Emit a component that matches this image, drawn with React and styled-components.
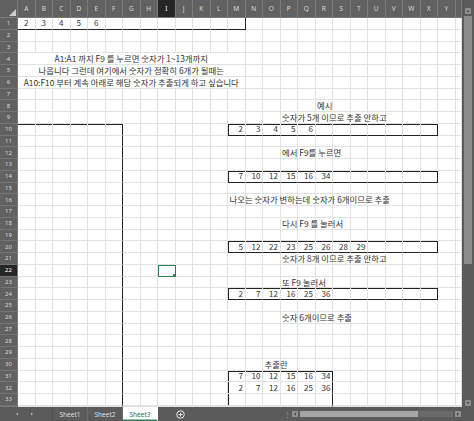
import React from 'react';
import styled, { createGlobalStyle } from 'styled-components';

const INK = '#222';
const GRID = '#e2e2e2';
const GREEN = '#2f7d57';

const GlobalStyle = createGlobalStyle`
  html, body {
    margin: 0;
    padding: 0;
    background: #5b5b5b;
  }
  body {
    width: 474px;
    height: 421px;
    overflow: hidden;
    font-family: "Noto Sans CJK KR", "Noto Sans", sans-serif;
  }
`;

const COLS = 'ABCDEFGHIJKLMNOPQRSTUVWXY'.split('');
const LAST_ROW = 34;

// A4:M6 style merged notes, centred over A:M
const merged = {
  4: 'A1:A1 까지 F9 를 누르면 숫자가 1~13개까지',
  5: '나옵니다 그런데 여기에서 숫자가 정확히 6개가 될때는',
  6: 'A10:F10 부터 계속 아래로 해당 숫자가 추출되게 하고 싶습니다',
};

// [column index, text] — text spills to the right like excel does
const notes = {
  8: [17, '예시'],
  9: [15, '숫자가 5개 이므로 추출 안하고'],
  12: [15, '에서 F9를 누르면'],
  16: [12, '나오는 숫자가 변하는데 숫자가 6개이므로 추출'],
  18: [15, '다시 F9 를 눌러서'],
  21: [15, '숫자가 8개 이므로 추출 안하고'],
  23: [15, '또 F9 눌러서'],
  26: [15, '숫자 6개이므로 추출'],
  30: [14, '추출란'],
};

const values = {
  1: { start: 0, nums: [2, 3, 4, 5, 6], align: 'center' },
  10: { start: 12, nums: [2, 3, 4, 5, 6] },
  14: { start: 12, nums: [7, 10, 12, 15, 16, 34] },
  20: { start: 12, nums: [5, 12, 22, 23, 25, 26, 28, 29] },
  24: { start: 12, nums: [2, 7, 12, 16, 25, 36] },
  31: { start: 12, nums: [7, 10, 12, 15, 16, 34] },
  32: { start: 12, nums: [2, 7, 12, 16, 25, 36] },
};

const SELECTED = { r: 22, c: 8 };

const borders = (r, c) => {
  const b = { t: false, r: false, b: false, l: false };
  if (r === 1 && c <= 12) {
    b.b = true;
    if (c === 12) b.r = true;
  }
  if (r >= 10 && c <= 5) {
    if (r === 10) b.t = true;
    if (c === 5) b.r = true;
  }
  if ([10, 14, 20, 24].includes(r) && c >= 12 && c <= 23) {
    b.t = true;
    b.b = true;
    if (c === 12) b.l = true;
    if (c === 23) b.r = true;
  }
  if (r >= 31 && c >= 12 && c <= 17) {
    if (r === 31) b.t = true;
    if (c === 12) b.l = true;
    if (c === 17) b.r = true;
  }
  return b;
};

const shadow = (p) => {
  const s = [];
  if (p.$bt) s.push(`inset 0 1px 0 ${INK}`);
  if (p.$bl) s.push(`inset 1px 0 0 ${INK}`);
  return s.length ? s.join(', ') : 'none';
};

const Window = styled.div`
  width: 474px;
  height: 421px;
  display: flex;
  flex-direction: column;
  background: #5b5b5b;
`;

const Main = styled.div`
  display: flex;
  height: 407px;
`;

const Sheet = styled.div`
  flex: 1;
  display: grid;
  grid-template-columns: 18px repeat(25, 17.5px) 1fr;
  grid-template-rows: 18px repeat(33, 11.75px) 1fr;
  background: #fff;
  overflow: hidden;
`;

const Corner = styled.div`
  background: #616161;
  border-right: 1px solid #7a7a7a;
  border-bottom: 1px solid #7a7a7a;
  display: flex;
  align-items: flex-end;
  justify-content: flex-end;
  padding: 0 1px 1px 0;
  box-sizing: border-box;
`;

const ColHead = styled.div`
  background: ${(p) => (p.$active ? '#262626' : '#616161')};
  color: ${(p) => (p.$active ? '#fff' : '#d8d8d8')};
  border-right: 1px solid #7a7a7a;
  border-bottom: 1px solid #7a7a7a;
  box-sizing: border-box;
  display: flex;
  align-items: center;
  justify-content: center;
  font-family: "Noto Sans", sans-serif;
  font-size: 6.5px;
  overflow: hidden;
`;

const RowHead = styled(ColHead)`
  font-size: 6px;
  border-bottom-color: #747474;
`;

const Cell = styled.div`
  box-sizing: border-box;
  min-width: 0;
  background: #fff;
  border-right: 1px solid ${(p) => (p.$br ? INK : GRID)};
  border-bottom: 1px solid ${(p) => (p.$bb ? INK : GRID)};
  box-shadow: ${shadow};
  grid-column: span ${(p) => p.$span || 1};
  display: flex;
  align-items: center;
  justify-content: ${(p) =>
    p.$align === 'right' ? 'flex-end' : p.$align === 'center' ? 'center' : 'flex-start'};
  padding: 0 1.5px;
  font-size: ${(p) => (p.$spill ? '8.4px' : '8px')};
  line-height: 1;
  color: #333;
  white-space: nowrap;
  overflow: ${(p) => (p.$spill ? 'visible' : 'hidden')};
  position: relative;
  z-index: ${(p) => (p.$sel ? 2 : p.$spill ? 1 : 'auto')};
  outline: ${(p) => (p.$sel ? `1.5px solid ${GREEN}` : 'none')};
  outline-offset: -1px;

  &::after {
    content: '';
    display: ${(p) => (p.$sel ? 'block' : 'none')};
    position: absolute;
    right: -2px;
    bottom: -2px;
    width: 3px;
    height: 3px;
    background: ${GREEN};
    border: 0.5px solid #fff;
  }
`;

const VScroll = styled.div`
  width: 12px;
  background: #5a5a5a;
  display: flex;
  flex-direction: column;
  align-items: center;
  padding: 8px 0 1px;
  box-sizing: border-box;
`;

const ArrowBtn = styled.div`
  width: 6px;
  height: 6px;
  background: #8f8f8f;
  display: flex;
  align-items: center;
  justify-content: center;
  flex-shrink: 0;
`;

const VThumb = styled.div`
  width: 8px;
  height: 248px;
  margin-top: 2px;
  background: #8c8c8c;
`;

const Grow = styled.div`
  flex: 1;
`;

const TabBar = styled.div`
  height: 14px;
  display: flex;
  align-items: stretch;
  background: #5b5b5b;
  font-family: "Noto Sans", sans-serif;
`;

const Nav = styled.div`
  width: 53px;
  display: flex;
  align-items: center;
  padding-left: 15px;
  gap: 11px;
  box-sizing: border-box;
  border-right: 1px solid #505050;
`;

const Tab = styled.div`
  width: 35px;
  display: flex;
  align-items: center;
  justify-content: center;
  font-size: 6.5px;
  color: ${(p) => (p.$active ? '#217346' : '#dedede')};
  background: ${(p) => (p.$active ? '#fff' : 'transparent')};
  border-right: 1px solid ${(p) => (p.$active ? 'transparent' : '#6c6c6c')};
  box-shadow: ${(p) => (p.$active ? `inset 0 -1.5px 0 ${GREEN}` : 'none')};
  box-sizing: border-box;
`;

const AddBtn = styled.div`
  width: 44px;
  display: flex;
  align-items: center;
  justify-content: center;
`;

const Dots = styled.div`
  width: 10px;
  display: flex;
  align-items: center;
  justify-content: center;
  color: #aaa;
  font-size: 7px;
  line-height: 1;
`;

const HScroll = styled.div`
  width: 170px;
  display: flex;
  align-items: center;
  gap: 2px;
  padding-right: 1px;
  box-sizing: border-box;
`;

const HTrack = styled.div`
  flex: 1;
  height: 6px;
  background: #6a6a6a;
  display: flex;
`;

const HThumb = styled.div`
  width: 118px;
  height: 100%;
  background: #a5a5a5;
`;

const BarCorner = styled.div`
  width: 12px;
  background: #5a5a5a;
`;

const Tri = ({ dir = 'right', color = '#444', size = 4 }) => (
  <svg width={size} height={size} viewBox="0 0 4 4">
    {dir === 'up' && <path d="M0.5 3 L2 1 L3.5 3 Z" fill={color} />}
    {dir === 'down' && <path d="M0.5 1 L2 3 L3.5 1 Z" fill={color} />}
    {dir === 'left' && <path d="M3 0.5 L1 2 L3 3.5 Z" fill={color} />}
    {dir === 'right' && <path d="M1 0.5 L3 2 L1 3.5 Z" fill={color} />}
  </svg>
);

const renderRow = (r) => {
  const out = [
    <RowHead key={`h${r}`} $active={r === SELECTED.r}>
      {r < LAST_ROW ? r : null}
    </RowHead>,
  ];
  if (merged[r]) {
    out.push(
      <Cell key={`m${r}`} $span={13} $align="center" $spill>
        {merged[r]}
      </Cell>
    );
  }
  const val = values[r];
  const note = notes[r];
  for (let c = merged[r] ? 13 : 0; c < COLS.length; c++) {
    const b = borders(r, c);
    let content = null;
    let align = 'left';
    let spill = false;
    if (val && c >= val.start && c < val.start + val.nums.length) {
      content = val.nums[c - val.start];
      align = val.align || 'right';
    }
    if (note && note[0] === c) {
      content = note[1];
      spill = true;
    }
    out.push(
      <Cell
        key={`${r}-${c}`}
        $bt={b.t}
        $br={b.r}
        $bb={b.b}
        $bl={b.l}
        $align={align}
        $spill={spill}
        $sel={r === SELECTED.r && c === SELECTED.c}
      >
        {content}
      </Cell>
    );
  }
  out.push(<Cell key={`z${r}`} />);
  return out;
};

const App = () => {
  const rows = [];
  for (let r = 1; r <= LAST_ROW; r++) rows.push(...renderRow(r));

  return (
    <>
      <GlobalStyle />
      <Window>
        <Main>
          <Sheet>
            <Corner>
              <svg width="7" height="7" viewBox="0 0 7 7">
                <path d="M7 0 L7 7 L0 7 Z" fill="#cfcfcf" />
              </svg>
            </Corner>
            {COLS.map((l, i) => (
              <ColHead key={l} $active={i === SELECTED.c}>
                {l}
              </ColHead>
            ))}
            <ColHead />
            {rows}
          </Sheet>
          <VScroll>
            <ArrowBtn>
              <Tri dir="up" />
            </ArrowBtn>
            <VThumb />
            <Grow />
            <ArrowBtn>
              <Tri dir="down" />
            </ArrowBtn>
          </VScroll>
        </Main>
        <TabBar>
          <Nav>
            <Tri dir="left" color="#b5b5b5" />
            <Tri dir="right" color="#b5b5b5" />
          </Nav>
          <Tab>Sheet1</Tab>
          <Tab>Sheet2</Tab>
          <Tab $active>Sheet3</Tab>
          <AddBtn>
            <svg width="9" height="9" viewBox="0 0 10 10">
              <circle cx="5" cy="5" r="4.2" fill="none" stroke="#ececec" strokeWidth="1.1" />
              <path d="M5 2.8 V7.2 M2.8 5 H7.2" stroke="#ececec" strokeWidth="1.1" />
            </svg>
          </AddBtn>
          <Grow />
          <Dots>⋮</Dots>
          <HScroll>
            <ArrowBtn>
              <Tri dir="left" />
            </ArrowBtn>
            <HTrack>
              <HThumb />
            </HTrack>
            <ArrowBtn>
              <Tri dir="right" />
            </ArrowBtn>
          </HScroll>
          <BarCorner />
        </TabBar>
      </Window>
    </>
  );
};

export default App;
